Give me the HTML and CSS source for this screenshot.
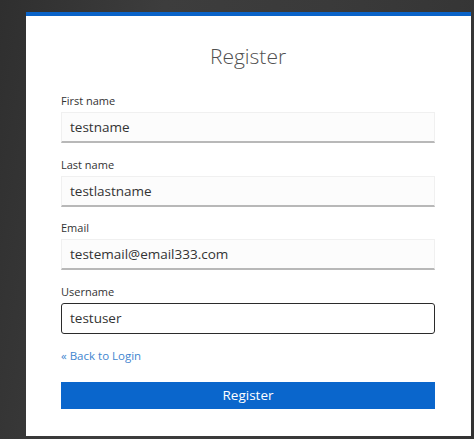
FILE: index.html
```html
<!DOCTYPE html>
<html lang="en">
<head>
<meta charset="utf-8">
<title>Register</title>
<link rel="stylesheet" href="styles.css">
</head>
<body>
<div class="page">
  <div class="card">
    <h1 class="title">Register</h1>
    <form class="form">
      <div class="group">
        <label class="label">First name</label>
        <div class="input">testname</div>
      </div>
      <div class="group">
        <label class="label">Last name</label>
        <div class="input">testlastname</div>
      </div>
      <div class="group">
        <label class="label">Email</label>
        <div class="input">testemail@email333.com</div>
      </div>
      <div class="group">
        <label class="label">Username</label>
        <div class="input focus">testuser</div>
      </div>
      <a class="back" href="#">« Back to Login</a>
      <div class="button">Register</div>
    </form>
  </div>
</div>
</body>
</html>
```
FILE: styles.css
```css
html, body {
  margin: 0;
  padding: 0;
}
body {
  width: 474px;
  height: 439px;
  overflow: hidden;
  background: linear-gradient(100deg, #2f2f2f 0%, #3d3d3d 30%, #3a3a3a 60%, #333 100%);
  font-family: "Open Sans", "Noto Sans", sans-serif;
}
.page {
  padding: 12px 3px 0 26px;
}
.card {
  background: #fff;
  border-top: 4px solid #0a63c8;
  height: 424px;
  box-sizing: border-box;
  padding: 0 36px 0 35px;
  display: flex;
  flex-direction: column;
}
.title {
  margin: 26px 0 23px;
  font-size: 21px;
  line-height: 28px;
  font-weight: 300;
  color: #505050;
  text-align: center;
}
.form {
  display: flex;
  flex-direction: column;
}
.group {
  display: flex;
  flex-direction: column;
  margin-bottom: 13.5px;
}
.label {
  font-size: 11px;
  line-height: 16px;
  color: #333;
  margin-bottom: 3px;
}
.input {
  height: 31px;
  box-sizing: border-box;
  background: #fcfcfc;
  border: 1px solid #f0f0f0;
  border-bottom: 2px solid #b8b8b8;
  padding: 0 8px;
  font-size: 13.5px;
  line-height: 28px;
  color: #333;
}
.input.focus {
  background: #fff;
  border: 1.5px solid #2b2b2b;
  border-radius: 3px;
  line-height: 28px;
}
.back {
  margin-top: 0;
  font-size: 11.5px;
  line-height: 18px;
  color: #3f86cf;
  text-decoration: none;
  align-self: flex-start;
}
.button {
  margin-top: 17px;
  height: 27px;
  background: #0a66cc;
  color: #fff;
  font-size: 13.5px;
  line-height: 27px;
  text-align: center;
}
```
